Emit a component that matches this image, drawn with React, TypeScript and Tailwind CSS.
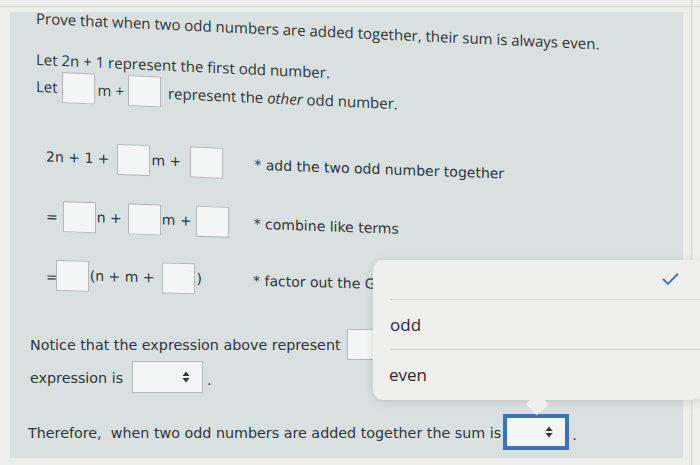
import { Check } from "lucide-react";

const Box = ({ className = "" }: { className?: string }) => (
  <span className={`inline-block shrink-0 w-[33px] h-[31px] bg-[#f4f5f5] border border-[#b3b8b8] ${className}`} />
);

const UpDown = () => (
  <svg width="8" height="12" viewBox="0 0 8 12" className="text-[#333]">
    <path d="M4 0.5 L7.5 5 H0.5 Z" fill="currentColor" />
    <path d="M4 11.5 L7.5 7 H0.5 Z" fill="currentColor" />
  </svg>
);

const SelectBox = ({ active = false, className = "" }: { active?: boolean; className?: string }) => (
  <span
    className={`inline-flex items-center justify-end pr-[12px] bg-[#f4f5f5] ${
      active ? "border-[4px] border-[#3b74bd]" : "border border-[#b3b8b8]"
    } ${className}`}
  >
    <UpDown />
  </span>
);

export default function App() {
  return (
    <div className="relative w-[700px] h-[465px] overflow-hidden bg-[#eeeeec] text-[#2e3538]">
      <div className="absolute left-0 right-0 top-[6px] h-px bg-[#d6d8d7]" />
      <div className="absolute top-0 bottom-0 left-[691px] w-px bg-[#d2d4d3]" />

      {/* question panel (the photo is shot at an angle, hence the skewed rows) */}
      <div className="ml-[10px] mt-[12px] w-[673px] h-[446px] bg-[#d9e1e0]">
        <div className="pl-[26px] pt-[10px] font-['Open_Sans',sans-serif] text-[15px] leading-[20px] skew-y-[2.6deg]">
          <p>Prove that when two odd numbers are added together, their sum is always even.</p>
          <p className="mt-[21px]">Let 2n + 1 represent the first odd number.</p>
          <div className="flex items-center h-[32px] mt-[1px]">
            <span className="mt-[-1px]">Let</span>
            <Box className="ml-[4px]" />
            <span className="ml-[3px] mt-[2px]">m +</span>
            <Box className="ml-[4px]" />
            <span className="ml-[7px] mt-[1px]">
              represent the <i>other</i> odd number.
            </span>
          </div>
        </div>

        <div className="font-['DejaVu_Sans',sans-serif] text-[14px] leading-[18px]">
          <div className="flex items-center pl-[36px] mt-[34px] h-[34px] skew-y-[2deg]">
            <span className="mt-[-1px]">2n + 1 +</span>
            <Box className="ml-[7px]" />
            <span className="ml-[2px] mt-[-1px]">m +</span>
            <Box className="ml-[9px]" />
            <span className="ml-[31px] mt-[2px]">* add the two odd number together</span>
          </div>

          <div className="flex items-center pl-[36px] mt-[25px] h-[34px] skew-y-[2deg]">
            <span className="mt-[2px]">=</span>
            <Box className="ml-[5px]" />
            <span className="ml-[1px]">n +</span>
            <Box className="ml-[6px]" />
            <span className="ml-[1px]">m +</span>
            <Box className="ml-[4px]" />
            <span className="ml-[25px] mt-[1px]">* combine like terms</span>
          </div>

          <div className="flex items-center pl-[36px] mt-[22px] h-[34px] skew-y-[1.4deg]">
            <span className="mt-[4px]">=</span>
            <Box className="ml-[-2px]" />
            <span className="ml-[1px]">(n + m +</span>
            <Box className="ml-[7px]" />
            <span className="ml-[2px]">)</span>
            <span className="ml-[51px] mt-[1px] whitespace-nowrap">* factor out the GCF</span>
          </div>

          <div className="text-[14.3px]">
            <div className="flex items-center pl-[20px] mt-[30px] h-[30px]">
              <span className="mt-[2px]">Notice that the expression above represent</span>
              <Box className="ml-[6px] w-[40px] h-[29px]" />
            </div>

            <div className="flex items-center pl-[20px] mt-[2px] h-[32px]">
              <span className="mt-[2px]">expression is</span>
              <SelectBox className="ml-[9px] w-[71px] h-[32px]" />
              <span className="ml-[4px] mt-[6px]">.</span>
            </div>

            <div className="flex items-center pl-[18px] mt-[21px] h-[36px]">
              <span className="mt-[1px]">Therefore,&nbsp; when two odd numbers are added together the sum is</span>
              <SelectBox active className="ml-[2px] w-[66px] h-[36px]" />
              <span className="ml-[3px] mt-[6px]">.</span>
            </div>
          </div>
        </div>
      </div>

      {/* dropdown popover */}
      <div className="absolute left-[373px] top-[260px] w-[330px] h-[140px] rounded-[10px] bg-[#efefee] shadow-[0_2px_10px_rgba(0,0,0,0.12)] font-['Open_Sans',sans-serif] text-[17px] text-[#2b2b2b]">
        <div className="flex justify-end h-[40px] ml-[17px] pr-[22px] pt-[9px] border-b border-[#d3d3d2]">
          <Check size={21} strokeWidth={2.2} className="text-[#3a72c8]" />
        </div>
        <div className="flex items-center h-[50px] ml-[17px] border-b border-[#d3d3d2]">odd</div>
        <div className="flex items-center h-[50px] pl-[16px]">even</div>
      </div>
      <div className="absolute left-[529px] top-[396px] w-[16px] h-[16px] rotate-45 bg-[#efefee]" />
    </div>
  );
}
